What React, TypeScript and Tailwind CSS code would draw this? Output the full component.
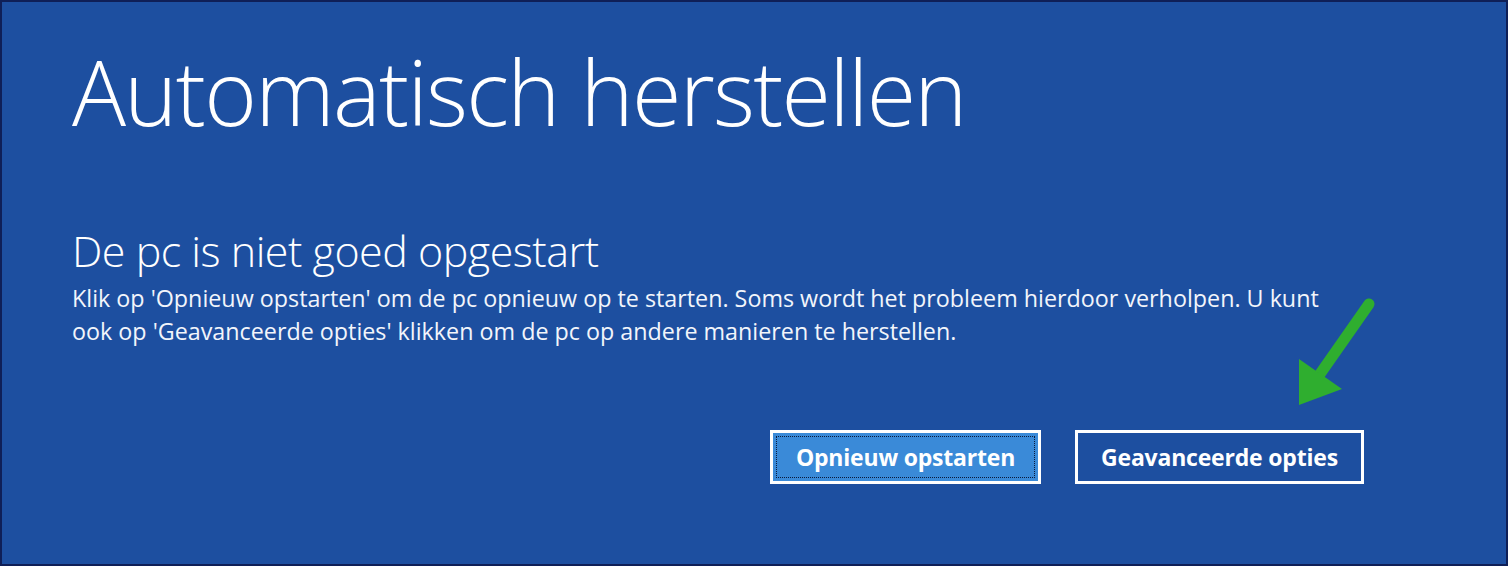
export default function App() {
  return (
    <div
      className="relative w-[1508px] h-[566px] bg-[#1d4fa0] border-2 border-[#0f1f57] flex flex-col pl-[70px] text-white overflow-hidden"
      style={{ fontFamily: '"Open Sans", "Noto Sans", sans-serif' }}
    >
      <h1 className="mt-[34px] text-[90px] font-light leading-[110px] tracking-[-1.7px]">
        Automatisch herstellen
      </h1>
      <h2 className="mt-[80px] text-[43px] font-light leading-[50px] tracking-[-0.5px]">
        De pc is niet goed opgestart
      </h2>
      <p className="mt-[6px] text-[23.3px] leading-[33px] w-[1380px] text-[#f2f5fb]">
        Klik op 'Opnieuw opstarten' om de pc opnieuw op te starten. Soms wordt het probleem hierdoor verholpen. U kunt
        <br />
        ook op 'Geavanceerde opties' klikken om de pc op andere manieren te herstellen.
      </p>
      <div className="mt-[82px] flex justify-end gap-[34px] pr-[142px]">
        <button className="w-[271px] h-[54px] border-[3px] border-white bg-[#3a8ad8] p-[3px]">
          <div className="w-full h-full border border-dotted border-[#0b1a3a] flex items-center justify-center text-[23px] font-bold tracking-[-0.2px]">
            Opnieuw opstarten
          </div>
        </button>
        <button className="w-[289px] h-[54px] border-[3px] border-white flex items-center justify-center text-[23px] font-bold tracking-[-0.2px]">
          Geavanceerde opties
        </button>
      </div>
      <svg className="absolute left-0 top-0" width="1508" height="566" viewBox="0 0 1508 566">
        <line x1="1367" y1="302" x2="1318" y2="372" stroke="#2fae2f" strokeWidth="11" strokeLinecap="round" />
        <polygon points="1297,403 1297,357 1340,387" fill="#2fae2f" />
      </svg>
    </div>
  );
}
